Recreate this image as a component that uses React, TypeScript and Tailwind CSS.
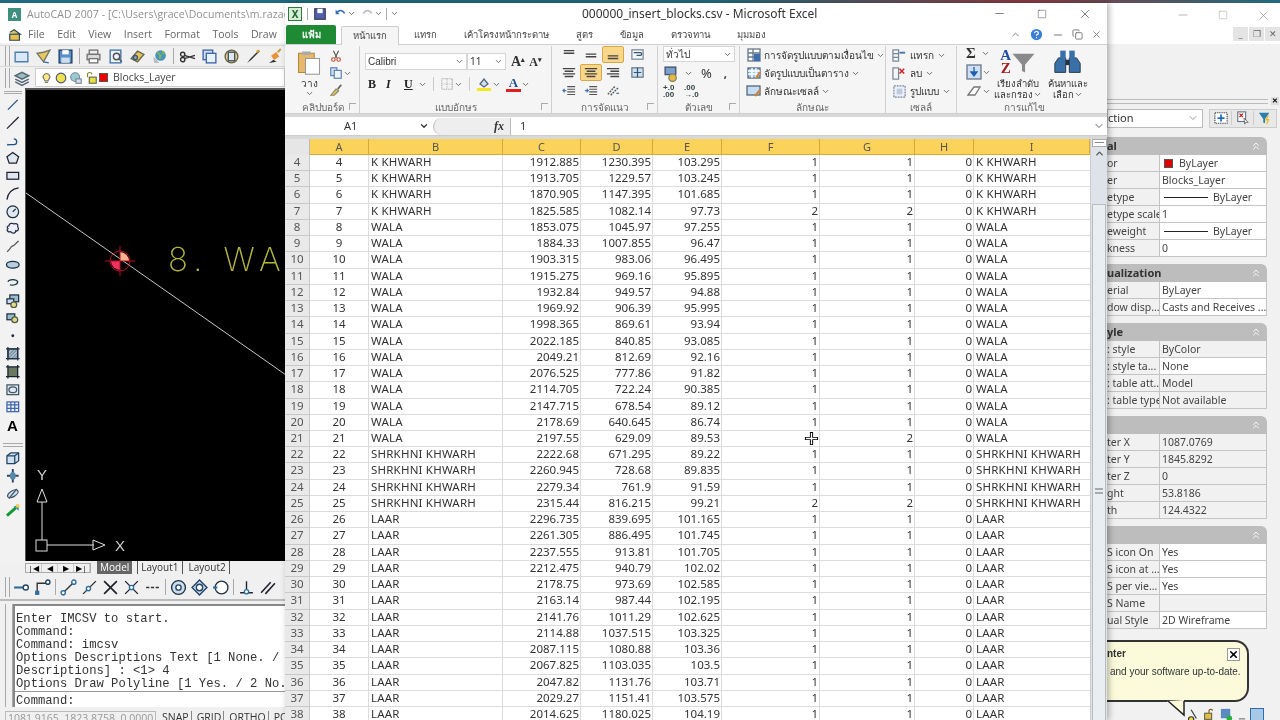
import React from "react";
import { ChevronDown, ChevronsUp, Minus, Square, X, HelpCircle, ChevronUp, Copy } from "lucide-react";

type I = { children: React.ReactNode; s?: number; cls?: string };
const Ico = ({ children, s = 16, cls = "" }: I) => (
  <svg width={s} height={s} viewBox="0 0 16 16" fill="none" strokeWidth={1.3} className={`shrink-0 ${cls}`}>
    {children}
  </svg>
);

const rows: [number, string, string, string, string, string, string, string][] = [
  [4, "K KHWARH", "1912.885", "1230.395", "103.295", "1", "1", "0"],
  [5, "K KHWARH", "1913.705", "1229.57", "103.245", "1", "1", "0"],
  [6, "K KHWARH", "1870.905", "1147.395", "101.685", "1", "1", "0"],
  [7, "K KHWARH", "1825.585", "1082.14", "97.73", "2", "2", "0"],
  [8, "WALA", "1853.075", "1045.97", "97.255", "1", "1", "0"],
  [9, "WALA", "1884.33", "1007.855", "96.47", "1", "1", "0"],
  [10, "WALA", "1903.315", "983.06", "96.495", "1", "1", "0"],
  [11, "WALA", "1915.275", "969.16", "95.895", "1", "1", "0"],
  [12, "WALA", "1932.84", "949.57", "94.88", "1", "1", "0"],
  [13, "WALA", "1969.92", "906.39", "95.995", "1", "1", "0"],
  [14, "WALA", "1998.365", "869.61", "93.94", "1", "1", "0"],
  [15, "WALA", "2022.185", "840.85", "93.085", "1", "1", "0"],
  [16, "WALA", "2049.21", "812.69", "92.16", "1", "1", "0"],
  [17, "WALA", "2076.525", "777.86", "91.82", "1", "1", "0"],
  [18, "WALA", "2114.705", "722.24", "90.385", "1", "1", "0"],
  [19, "WALA", "2147.715", "678.54", "89.12", "1", "1", "0"],
  [20, "WALA", "2178.69", "640.645", "86.74", "1", "1", "0"],
  [21, "WALA", "2197.55", "629.09", "89.53", "", "2", "0"],
  [22, "SHRKHNI KHWARH", "2222.68", "671.295", "89.22", "1", "1", "0"],
  [23, "SHRKHNI KHWARH", "2260.945", "728.68", "89.835", "1", "1", "0"],
  [24, "SHRKHNI KHWARH", "2279.34", "761.9", "91.59", "1", "1", "0"],
  [25, "SHRKHNI KHWARH", "2315.44", "816.215", "99.21", "2", "2", "0"],
  [26, "LAAR", "2296.735", "839.695", "101.165", "1", "1", "0"],
  [27, "LAAR", "2261.305", "886.495", "101.745", "1", "1", "0"],
  [28, "LAAR", "2237.555", "913.81", "101.705", "1", "1", "0"],
  [29, "LAAR", "2212.475", "940.79", "102.02", "1", "1", "0"],
  [30, "LAAR", "2178.75", "973.69", "102.585", "1", "1", "0"],
  [31, "LAAR", "2163.14", "987.44", "102.195", "1", "1", "0"],
  [32, "LAAR", "2141.76", "1011.29", "102.625", "1", "1", "0"],
  [33, "LAAR", "2114.88", "1037.515", "103.325", "1", "1", "0"],
  [34, "LAAR", "2087.115", "1080.88", "103.36", "1", "1", "0"],
  [35, "LAAR", "2067.825", "1103.035", "103.5", "1", "1", "0"],
  [36, "LAAR", "2047.82", "1131.76", "103.71", "1", "1", "0"],
  [37, "LAAR", "2029.27", "1151.41", "103.575", "1", "1", "0"],
  [38, "LAAR", "2014.625", "1180.025", "104.19", "1", "1", "0"],
];

const BL = "#2f6f9f";
const Line = ({ d, c = "#1f4f80" }: { d: string; c?: string }) => <path d={d} stroke={c} />;

const paletteTop = [
  <Line d="M3 13L13 3" />,
  <Line d="M2 14L14 2" c="#223" />,
  <><Line d="M3 12h6c4 0 4-6 0-6" /><circle cx="3" cy="12" r="1" fill={BL} /></>,
  <path d="M8 2.5L14 7l-2.3 6.5H4.3L2 7z" fill="#dfe8f0" stroke="#223" />,
  <rect x="2" y="4.5" width="12" height="7" fill="#dfe8f0" stroke="#223" />,
  <path d="M2 14C3 7 7 3 14 2" stroke="#223" />,
  <><circle cx="8" cy="8" r="6" fill="#dfe8f0" stroke="#234" /><path d="M8 8l3-3" stroke="#234" /></>,
  <path d="M4 5c0-3 4-3 5-2 2-1 5 0 4 3 2 2 0 5-2 4 0 3-4 3-5 1-3 1-5-2-3-3-1-1-1-3 1-3z" fill="#eef" stroke="#234" />,
  <path d="M2 13c3-1 3-5 6-6s3-3 6-5" stroke="#555" />,
  <ellipse cx="8" cy="8" rx="6.5" ry="3.5" fill="#bcd" stroke="#134" />,
  <path d="M3 7c1-3 9-3 10 0 0 3-5 4-8 3" stroke="#134" />,
  <><rect x="5" y="2" width="9" height="7" fill="#9bc" stroke="#234" /><rect x="2" y="6" width="7" height="5" fill="#cdf" stroke="#234" /><circle cx="9" cy="12" r="3" fill="#dd8" stroke="#554" /></>,
  <><rect x="2" y="4" width="8" height="6" fill="#9bc" stroke="#234" /><circle cx="10" cy="10" r="3" fill="#dd8" stroke="#554" /></>,
  <circle cx="8" cy="8" r="1.5" fill="#234" />,
  <><rect x="3" y="3" width="10" height="10" fill="#abc" stroke="#234" /><path d="M3 6L6 3M3 10l7-7M3 13L13 3M7 13l6-6M10 13l3-3" stroke="#567" strokeWidth=".8" /><path d="M1 3h14M1 13h14M3 1v14M13 1v14" stroke="#234" /></>,
  <><rect x="3" y="3" width="10" height="10" fill="#6a7a60" /><path d="M1 3h14M1 13h14M3 1v14M13 1v14" stroke="#123" /></>,
  <><path d="M2 3h12v10H2z" fill="#dfe8f0" stroke="#456" /><ellipse cx="8" cy="8" rx="4" ry="3" stroke="#456" /></>,
  <><rect x="2" y="3" width="12" height="10" fill="#eaf2fb" stroke="#46a" /><path d="M2 6h12M2 9.5h12M6 3v10M10 3v10" stroke="#46a" /></>,
];
const paletteBottom = [
  <><path d="M2 6l4-3h8v8l-4 3H2z" fill="#cfe0ee" stroke="#246" /><path d="M2 6h8v8M10 6l4-3" stroke="#246" /></>,
  <><path d="M8 1v14M2 8h12" stroke="#346" strokeWidth="2" /><ellipse cx="8" cy="8" rx="3" ry="4" fill="#58a" /></>,
  <><ellipse cx="8" cy="8" rx="6" ry="3" transform="rotate(-30 8 8)" fill="#cde" stroke="#456" /><path d="M4 13L12 3" stroke="#456" /></>,
  <><path d="M2 13L11 5" stroke="#193" strokeWidth="3" /><path d="M9 3h5v5z" fill="#28a" /><circle cx="13" cy="3" r="2" fill="#ec4" /></>,
];

const tb1 = [
  <path d="M2 4h12v9H2z" fill="#dbe9f7" stroke="#4a7fb0" />,
  <><path d="M2 5l6 8 6-11-6 2z" fill="#e8c860" stroke="#776" /><path d="M8 13l5 1" stroke={BL} /></>,
  <><rect x="2" y="2" width="12" height="12" fill="#5b8fc9" stroke="#246" /><rect x="5" y="2" width="6" height="4" fill="#fff" /><rect x="4" y="9" width="8" height="5" fill="#cde" /></>,
  null,
  <><rect x="4" y="2" width="8" height="4" fill="#eee" stroke="#777" /><rect x="2" y="6" width="12" height="5" fill="#ddd" stroke="#777" /><rect x="4" y="10" width="8" height="4" fill="#fff" stroke="#777" /></>,
  <><rect x="3" y="2" width="10" height="12" fill="#eef4fb" stroke="#47a" /><circle cx="9" cy="8" r="3" stroke="#555" /><path d="M11 10l3 3" stroke="#555" /></>,
  <><path d="M2 10l6-7 6 3-6 7z" fill="#e6c64e" stroke="#665" /><circle cx="6" cy="9" r="2" fill="#8ab" stroke="#456" /></>,
  <><circle cx="9" cy="7" r="5" fill="#4a90c0" /><path d="M6 4l3 3-1 3M11 3l1 3" stroke="#7b5" strokeWidth="2" /><path d="M2 8l6 6H3z" fill="#bbb" /></>,
  null,
  <><circle cx="3.5" cy="6" r="2" stroke="#333" /><circle cx="3.5" cy="11" r="2" stroke="#333" /><path d="M5 7l10 3M5 10l10-3" stroke="#333" /></>,
  <><rect x="2" y="2" width="9" height="9" fill="#cfe0f0" stroke="#46a" /><rect x="5" y="5" width="9" height="9" fill="#e8f0f8" stroke="#46a" /></>,
  <><circle cx="8" cy="8" r="6" fill="#e6d08a" stroke="#664" /><rect x="5" y="4" width="6" height="8" fill="#dfe8f0" stroke="#456" /></>,
  <><path d="M2 14l3-4 8-8 1 1-8 8z" fill="#333" /><path d="M11 4l2-2" stroke="#e8a030" strokeWidth="2" /></>,
  <><path d="M2 14l4-3 3 2z" fill="#333" /><rect x="5" y="5" width="6" height="5" fill="#e8923a" transform="rotate(-35 8 8)" /><path d="M10 4l3-3" stroke="#c8a040" strokeWidth="2" /></>,
];
const tb3 = [
  <><path d="M1 8h10" stroke={BL} strokeWidth="2" /><circle cx="12" cy="8" r="2.4" fill="#fff" stroke="#246" /></>,
  <><path d="M3 14V4h9" stroke="#333" /><circle cx="13" cy="3" r="2" fill="#fff" stroke="#246" /><rect x="1" y="11" width="4" height="4" fill={BL} /></>,
  null,
  <><path d="M3 13L13 3" stroke="#333" /><circle cx="3" cy="13" r="2" fill="#fff" stroke={BL} /><circle cx="13" cy="3" r="2" fill="#fff" stroke={BL} /></>,
  <><path d="M2 14L14 2" stroke="#333" /><circle cx="7" cy="9" r="2" fill="#fff" stroke={BL} /></>,
  <path d="M2 2l12 12M2 14L14 2" stroke="#223" strokeWidth="1.6" />,
  <><path d="M2 2l12 12M2 14L14 2" stroke="#223" /><circle cx="8" cy="8" r="2" fill="#fff" stroke={BL} /></>,
  <path d="M2 8h3M6.5 8h3M11 8h3" stroke="#333" strokeWidth="1.5" />,
  null,
  <><circle cx="8" cy="8" r="6.5" fill="#cde" stroke="#234" /><circle cx="8" cy="8" r="2.5" fill="#fff" stroke="#246" /></>,
  <><path d="M8 1l7 7-7 7-7-7z" fill="#cde" stroke="#246" /><circle cx="8" cy="8" r="3" fill="#fff" stroke="#246" /></>,
  <><circle cx="9" cy="8" r="6" fill="#fff" stroke="#234" /><path d="M1 8h4" stroke={BL} strokeWidth="2" /></>,
  null,
  <><path d="M8 2v10M2 13h12" stroke="#223" /><circle cx="8" cy="12" r="2" fill="#fff" stroke={BL} /></>,
  <path d="M2 13L11 3M6 14l9-10" stroke="#223" strokeWidth="1.5" />,
];

const Grip = () => <div className="w-[5px] h-[20px] border-x border-[#a8a8a8] mr-[3px] shrink-0" />;
const Tb = ({ items, gap = "gap-[5px]" }: { items: (React.ReactNode | null)[]; gap?: string }) => (
  <div className={`flex items-center ${gap}`}>
    {items.map((c, i) =>
      c === null ? <div key={i} className="w-px h-[16px] bg-[#aaa]" /> : <Ico key={i} s={17}>{c}</Ico>
    )}
  </div>
);

const cmd = [
  "Enter IMCSV to start.",
  "Command:",
  "Command: imcsv",
  "Options Descriptions Text [1 None. / 2 Block",
  "Descriptions] : <1> 4",
  "Options Draw Polyline [1 Yes. / 2 No.] <1> 1",
];

function AutoCad() {
  return (
    <div className="w-[285px] shrink-0 h-full flex flex-col overflow-hidden bg-[#f0f0f0] font-['Open_Sans',sans-serif]">
      <div className="h-[23px] bg-white flex items-center pl-[8px] gap-[6px] whitespace-nowrap shrink-0">
        <div className="w-[13px] h-[13px] bg-[#3f8f7f] text-white text-[8px] leading-[13px] text-center font-bold shrink-0">A</div>
        <span className="text-[10.5px] tracking-[0.1px] text-[#8f8f8f]">AutoCAD 2007 - [C:\Users\grace\Documents\m.razaq</span>
      </div>
      <div className="h-[17px] bg-white flex items-center pl-[8px] text-[10.5px] text-[#666] whitespace-nowrap shrink-0">
        <Ico s={14}><path d="M2 5l5-3 7 5H2v7h11V7" fill="#e8c050" stroke="#245" /></Ico>
        <div className="flex gap-[12.5px] pl-[6px]">
          {["File", "Edit", "View", "Insert", "Format", "Tools", "Draw"].map((m) => <span key={m}>{m}</span>)}
        </div>
      </div>
      <div className="h-[22px] mt-[2px] border-y border-[#d8d8d8] flex items-center pl-[5px] shrink-0">
        <Grip />
        <Tb items={tb1} />
      </div>
      <div className="h-[21px] flex items-center pl-[5px] shrink-0">
        <Grip />
        <Ico s={18}><path d="M2 6l6-3 6 3-6 3z" fill="#9bb" stroke="#567" /><path d="M2 9l6 3 6-3M2 11.5l6 3 6-3" stroke="#567" /></Ico>
        <div className="ml-[4px] flex-1 h-[19px] bg-white border border-[#ccc] flex items-center gap-[1px] pl-[4px] text-[10.5px] leading-[17px] text-[#444] whitespace-nowrap">
          <Ico s={13}><path d="M5 10a4 4 0 1 1 6 0l-1 2H6zM6 14h4" fill="#ffe98a" stroke="#776" /></Ico>
          <Ico s={14}><circle cx="8" cy="8" r="5.5" fill="#f0e050" stroke="#457" /></Ico>
          <Ico s={14}><circle cx="7" cy="7" r="5" fill="#9cc" stroke="#789" /><rect x="8" y="9" width="6" height="5" fill="#dde" stroke="#789" /></Ico>
          <Ico s={14}><path d="M4 7V4c0-3 5-3 5 0" stroke="#8a8a20" /><rect x="6" y="7" width="8" height="7" fill="#e6e040" stroke="#665" /></Ico>
          <div className="w-[9px] h-[9px] bg-[#ee0000] border border-[#555] mr-[4px]" />
          <span>Blocks_Layer</span>
        </div>
      </div>
      <div className="h-[473px] flex shrink-0">
        <div className="w-[25px] shrink-0 flex flex-col items-center pt-[3px] bg-[#f2f2f2]">
          <div className="w-[18px] h-[3px] border-y border-[#aaa] mb-[3px]" />
          <div className="flex flex-col items-center gap-[2.2px]">
            {paletteTop.map((c, i) => <Ico key={i} s={15.6}>{c}</Ico>)}
            <span className="text-[15px] leading-[17px] font-bold text-black font-['Liberation_Sans',sans-serif]">A</span>
          </div>
          <div className="w-[20px] h-[4px] border-y border-[#aaa] mt-[9px] mb-[3px]" />
          <div className="flex flex-col items-center gap-[2.2px]">
            {paletteBottom.map((c, i) => <Ico key={i} s={15.6}>{c}</Ico>)}
          </div>
        </div>
        <div className="flex-1 bg-black border-t-2 border-l border-[#555] overflow-hidden">
          <svg width="260" height="473" viewBox="0 0 260 473" className="block" fill="none">
            <path d="M0 103L260 285" stroke="#c8c8c8" />
            <circle cx="94" cy="171" r="10" fill="none" stroke="#b01020" />
            <path d="M94 171V162a9 9 0 0 1 9 9z" fill="#ffb090" />
            <path d="M94 171h-9a9 9 0 0 0 9 9z" fill="#f03060" />
            <path d="M79 171h30M94 156v30" stroke="#b01020" />
            <text x="142" y="181" fill="#b4b43c" fontFamily="Inter, sans-serif" fontWeight="200" fontSize="33" letterSpacing="6">8. WA</text>
            <text x="11" y="390" fill="#cfcfcf" fontFamily="Liberation Sans, sans-serif" fontSize="15">Y</text>
            <path d="M16 450V412" stroke="#ddd" /><path d="M16 399l5 13H11z" stroke="#ddd" />
            <rect x="10" y="450" width="11" height="11" stroke="#ddd" />
            <path d="M21 455h47" stroke="#ddd" /><path d="M79 455l-12-5v10z" stroke="#ddd" />
            <text x="89" y="461" fill="#cfcfcf" fontFamily="Liberation Sans, sans-serif" fontSize="15">X</text>
          </svg>
        </div>
      </div>
      <div className="h-[13px] flex items-center pl-[25px] text-[10px] bg-[#f0f0f0] shrink-0">
        <div className="flex items-center border border-[#aaa] text-[8px] text-black leading-none">
          {["|◀", "◀", "▶", "▶|"].map((t) => <span key={t} className="w-[16px] text-center border-r border-[#ccc]">{t}</span>)}
        </div>
        <span className="bg-[#666] text-white px-[3px] ml-[6px] leading-[13px]">Model</span>
        <span className="text-[#333] ml-[5px] border-x border-[#555] px-[3px] leading-[13px]">Layout1</span>
        <span className="text-[#333] ml-[3px] border-r border-[#555] px-[3px] leading-[13px]">Layout2</span>
      </div>
      <div className="h-[26px] mt-[1px] border-b-2 border-[#bbb] flex items-center pl-[5px] shrink-0">
        <Grip />
        <Tb items={tb3} gap="gap-[4px]" />
      </div>
      <div className="h-[103px] mt-[3px] ml-[5px] flex shrink-0">
        <div className="w-[8px] border-x border-[#aaa] shrink-0" />
        <div className="flex-1 bg-white border-t-2 border-l-2 border-[#888] font-['Liberation_Mono',monospace] text-[12.2px] leading-[13px] text-[#333] whitespace-nowrap overflow-hidden flex flex-col">
          <div className="flex-1 pt-[7px] pl-px border-b border-[#999]">
            {cmd.map((l) => <div key={l}>{l}</div>)}
          </div>
          <div className="h-[18px] pl-px leading-[18px]">Command:</div>
        </div>
      </div>
      <div className="h-[15px] mt-[3px] flex items-center pl-[5px] text-[10.5px] text-[#333] whitespace-nowrap shrink-0">
        <div className="w-[151px] h-[14px] border border-[#bbb] text-[#999] pl-[2px] leading-[13px] overflow-hidden shrink-0">1081.9165, 1823.8758, 0.0000</div>
        <div className="flex gap-[5px] ml-[6px] leading-[13px]">
          <span className="pr-[2px] border-r border-[#888]">SNAP</span>
          <span className="pr-[2px] border-r border-[#888]">GRID</span>
          <span className="pr-[2px] border-r border-[#888]">ORTHO</span>
          <span>POLAR</span>
        </div>
      </div>
    </div>
  );
}

const Arrow = () => <ChevronDown size={9} strokeWidth={2.5} className="text-[#666] shrink-0" />;
const Launcher = () => (
  <span className="absolute right-[3px] top-[3px] w-[7px] h-[7px] border-l border-t border-[#aaa]" />
);
const Group = ({ w, label, launch, children }: { w: string; label: string; launch?: boolean; children: React.ReactNode }) => (
  <div className={`${w} shrink-0 h-full flex flex-col border-r border-[#d0d0d0]`}>
    <div className="flex-1 min-h-0">{children}</div>
    <div className="h-[13px] relative text-center text-[10px] leading-[14px] text-[#666] shrink-0">
      {label}
      {launch && <Launcher />}
    </div>
  </div>
);

const alignPaths: Record<number, string> = {
  0: "M2 3h12M2 6h12",
  1: "M2 7h12M2 10h12",
  2: "M2 9h12M2 12h12",
  4: "M1 3h14M3 6h10M1 9h14M3 12h10",
  5: "M1 3h14M3 6h10M1 9h14M3 12h10",
  6: "M1 3h14M5 6h10M1 9h14M5 12h10",
};

const Ribbon = () => (
  <div className="h-[70px] bg-[#f5f5f5] border-y border-[#cfcfcf] flex pl-[2px] pt-[1px] shrink-0 text-[11px] text-[#333] font-['Noto_Sans',sans-serif]">
    <Group w="w-[73px]" label="คลิปบอร์ด" launch>
      <div className="flex pl-[8px] pt-[2px] gap-[6px]">
        <div className="flex flex-col items-center w-[28px]">
          <Ico s={28}><rect x="2" y="3" width="9" height="11" fill="#e8b96a" stroke="#b08840" strokeWidth=".6" /><rect x="6" y="6" width="8" height="9" fill="#fff" stroke="#999" strokeWidth=".6" /><rect x="4" y="2" width="5" height="2" fill="#aaa" /></Ico>
          <span className="text-[10px] leading-[11px] mt-[2px]">วาง</span>
          <Arrow />
        </div>
        <div className="flex flex-col gap-[3px] pt-[1px]">
          <Ico s={14}><path d="M5 2l4 8M11 2L7 10" stroke="#555" /><circle cx="5" cy="12" r="2" stroke="#c05030" /><circle cx="11" cy="12" r="2" stroke="#c05030" /></Ico>
          <div className="flex items-center"><Ico s={14}><rect x="2" y="2" width="7" height="9" fill="#cfe0f5" stroke="#5a80b0" /><rect x="6" y="5" width="8" height="9" fill="#eef4fb" stroke="#5a80b0" /></Ico><Arrow /></div>
          <Ico s={14}><path d="M2 14l6-7 3 2-5 5z" fill="#e8c060" stroke="#886" /><path d="M10 7l4-5" stroke="#666" strokeWidth="2" /></Ico>
        </div>
      </div>
    </Group>
    <Group w="w-[192px]" label="แบบอักษร" launch>
      <div className="flex flex-col gap-[6px] pl-[5px] pt-[7px]">
        <div className="flex items-center">
          <div className="w-[102px] h-[17px] bg-white border border-[#d5d5d5] flex items-center justify-between px-[2px] font-['Liberation_Sans',sans-serif] text-[10px]">Calibri<Arrow /></div>
          <div className="w-[39px] h-[17px] bg-white border border-[#d5d5d5] flex items-center justify-between px-[2px] text-[10px]">11<Arrow /></div>
          <span className="ml-[5px] text-[14px] leading-none font-bold font-['Liberation_Serif',serif]">A<sup className="text-[7px]">▴</sup></span>
          <span className="ml-[4px] text-[12px] leading-none font-bold font-['Liberation_Serif',serif]">A<sup className="text-[7px]">▾</sup></span>
        </div>
        <div className="flex items-center pl-[3px] text-[#222] font-['Liberation_Serif',serif]">
          <b className="text-[12px] w-[18px] leading-none">B</b>
          <i className="text-[12px] w-[18px] leading-none font-semibold">I</i>
          <u className="text-[12px] w-[14px] leading-none font-bold">U</u><Arrow />
          <div className="w-px h-[14px] bg-[#ccc] mx-[6px]" />
          <Ico s={14}><rect x="2" y="2" width="12" height="12" stroke="#999" strokeDasharray="1 1" /><path d="M8 2v12M2 8h12" stroke="#bbb" strokeDasharray="1 1" /></Ico><Arrow />
          <div className="w-px h-[14px] bg-[#ccc] mx-[6px]" />
          <Ico s={16}><path d="M4 8l4-5 4 5-4 3z" fill="#cfe0f0" stroke="#567" /><rect x="1" y="12" width="14" height="3" fill="#f2e820" /></Ico><Arrow />
          <div className="flex flex-col items-center ml-[5px]"><span className="text-[13px] leading-[12px] font-bold text-[#1f4f90]">A</span><div className="w-[15px] h-[3px] bg-[#e02020]" /></div><Arrow />
        </div>
      </div>
    </Group>
    <Group w="w-[106px]" label="การจัดแนว" launch>
      <div className="grid grid-cols-[22px_22px_22px_26px] gap-y-px pl-[6px]">
        {[0, 1, 2, 3, 4, 5, 6, 7, 8, 9, 10].map((n) => (
          <div key={n} className={`h-[17px] flex items-center justify-center rounded-[2px] ${n === 2 || n === 5 ? "bg-[#f8d68a] border border-[#d8a848]" : ""}`}>
            {n === 8 ? (
              <Ico s={14}><path d="M6 3h9M6 6h9M6 9h9M6 12h9" stroke="#555" /><path d="M5 7.5H1M3 5.5l-2 2 2 2" stroke="#47a" /></Ico>
            ) : n === 9 ? (
              <Ico s={14}><path d="M6 3h9M6 6h9M6 9h9M6 12h9" stroke="#555" /><path d="M1 7.5h4M3 5.5l2 2-2 2" stroke="#47a" /></Ico>
            ) : n === 10 ? (
              <Ico s={15}><path d="M2 12L10 3M5 13l8-8" stroke="#555" strokeWidth="1.5" strokeDasharray="2 1" /><path d="M11 11h3" stroke="#47a" /></Ico>
            ) : n === 3 ? (
              <Ico s={15}><rect x="2" y="3" width="12" height="10" fill="#f4f7fa" stroke="#789" /><path d="M4 6h7c2 0 2 3 0 3H7" stroke="#357" /></Ico>
            ) : n === 7 ? (
              <Ico s={15}><rect x="2" y="3" width="12" height="10" fill="#cfe0f0" stroke="#678" /><path d="M4 8h8M8 3v10" stroke="#357" /></Ico>
            ) : (
              <Ico s={14}><path d={alignPaths[n]} stroke="#444" strokeWidth="1.5" /></Ico>
            )}
          </div>
        ))}
      </div>
    </Group>
    <Group w="w-[82px]" label="ตัวเลข" launch>
      <div className="flex flex-col gap-[2px] pl-[5px]">
        <div className="w-[72px] h-[16px] bg-white border border-[#d5d5d5] flex items-center justify-between px-[2px] text-[10px]">ทั่วไป<Arrow /></div>
        <div className="flex items-center gap-[4px] h-[18px]">
          <Ico s={17}><rect x="2" y="2" width="10" height="7" fill="#7a9fd0" stroke="#456" /><circle cx="9" cy="12" r="3.5" fill="#e8b840" stroke="#886" /></Ico><Arrow />
          <span className="text-[13px] leading-none ml-[4px]">%</span>
          <span className="ml-[8px] font-bold leading-none">,</span>
        </div>
        <div className="flex items-center gap-[4px] text-[8px] font-['Liberation_Sans',sans-serif] leading-[7px] text-[#344] h-[14px] font-bold">
          <span className="w-[17px]">+.0<br />.00</span>
          <span className="w-[17px]">.00<br />→.0</span>
        </div>
      </div>
    </Group>
    <Group w="w-[146px]" label="ลักษณะ">
      <div className="flex flex-col gap-[2px] pl-[6px] pt-[1px] text-[10px] whitespace-nowrap">
        <div className="flex items-center gap-[2px] h-[16px]"><Ico s={16}><rect x="2" y="2" width="12" height="12" fill="#fff" stroke="#678" /><path d="M2 6h12M2 10h12M7 2v12" stroke="#678" /><rect x="8" y="7" width="6" height="7" fill="#3a6fb0" /></Ico>การจัดรูปแบบตามเงื่อนไข<Arrow /></div>
        <div className="flex items-center gap-[2px] h-[16px]"><Ico s={16}><rect x="2" y="3" width="12" height="10" fill="#9ccaf0" stroke="#567" /><path d="M2 6h12M2 9h12M6 3v10M10 3v10" stroke="#fff" /><path d="M10 13l4-6" stroke="#d08030" strokeWidth="2" /></Ico>จัดรูปแบบเป็นตาราง<Arrow /></div>
        <div className="flex items-center gap-[2px] h-[16px]"><Ico s={16}><rect x="1" y="3" width="13" height="9" fill="#c5dcf5" stroke="#567" /><path d="M9 13l5-6" stroke="#d08030" strokeWidth="2" /></Ico>ลักษณะเซลล์<Arrow /></div>
      </div>
    </Group>
    <Group w="w-[71px]" label="เซลล์">
      <div className="flex flex-col gap-[2px] pl-[6px] pt-[1px] whitespace-nowrap text-[10px]">
        <div className="flex items-center gap-[3px] h-[16px]"><Ico s={15}><rect x="1" y="2" width="6" height="12" stroke="#789" /><path d="M1 6h6M1 10h6" stroke="#789" /><path d="M8 5h6" stroke="#47a" strokeWidth="2" /></Ico>แทรก<Arrow /></div>
        <div className="flex items-center gap-[3px] h-[16px]"><Ico s={15}><rect x="1" y="2" width="6" height="12" stroke="#789" /><path d="M8 3l5 5M13 3L8 8" stroke="#d02020" strokeWidth="1.6" /></Ico>ลบ<Arrow /></div>
        <div className="flex items-center gap-[3px] h-[16px]"><Ico s={15}><rect x="2" y="2" width="12" height="12" fill="#eef" stroke="#789" strokeDasharray="2 1" /><path d="M5 5h6v6H5z" fill="#bcd" /></Ico>รูปแบบ<Arrow /></div>
      </div>
    </Group>
    <div className="w-[135px] shrink-0 h-full flex flex-col">
      <div className="flex-1 flex min-h-0 pl-[9px]">
        <div className="flex flex-col gap-[4px]">
          <div className="flex items-center h-[14px]"><span className="font-['Liberation_Serif',serif] font-bold text-[15px] leading-none w-[15px]">Σ</span><Arrow /></div>
          <div className="flex items-center h-[16px]"><Ico s={16}><rect x="1" y="1" width="14" height="14" fill="#cfe0f5" stroke="#678" /><path d="M8 3v8M5 8l3 4 3-4z" fill="#2060b0" stroke="#2060b0" /></Ico><Arrow /></div>
          <div className="flex items-center h-[14px]"><Ico s={16}><path d="M2 12l6-8h6l-5 8z" fill="#fff" stroke="#777" /></Ico><Arrow /></div>
        </div>
        <div className="flex flex-col items-center w-[52px] ml-[2px] text-[9.5px] leading-[11px] text-center">
          <div className="h-[31px] flex items-center font-['Liberation_Serif',serif] font-bold text-[15px] leading-[13px]">
            <span className="text-[#2050a0]">A<br /><span className="text-[#a02020]">Z</span></span>
            <Ico s={25}><path d="M1 3h14L9 10v5l-2-1v-4z" fill="#8a8a8a" /></Ico>
          </div>
          <span className="whitespace-nowrap mt-[1px]">เรียงลำดับ</span>
          <span className="whitespace-nowrap flex items-center">และกรอง<Arrow /></span>
        </div>
        <div className="flex flex-col items-center w-[50px] text-[9.5px] leading-[11px] text-center">
          <div className="h-[31px] flex items-center"><Ico s={29}><path d="M3 6h4v8H1V9zM13 6H9v8h6V9z" fill="#3a70a8" stroke="#234" strokeWidth=".5" /><rect x="4" y="2" width="3" height="5" fill="#3a70a8" /><rect x="9" y="2" width="3" height="5" fill="#3a70a8" /><rect x="7" y="7" width="2" height="3" fill="#234" /></Ico></div>
          <span className="whitespace-nowrap mt-[1px]">ค้นหาและ</span>
          <span className="whitespace-nowrap flex items-center">เลือก<Arrow /></span>
        </div>
      </div>
      <div className="h-[13px] text-center text-[10px] leading-[14px] text-[#666] shrink-0">การแก้ไข</div>
    </div>
  </div>
);

const colW = ["w-[59px]", "w-[134px]", "w-[78px]", "w-[72px]", "w-[69px]", "w-[98px]", "w-[95px]", "w-[59px]", "w-[116px]"];
const colN = ["A", "B", "C", "D", "E", "F", "G", "H", "I"];

function Excel() {
  return (
    <div className="w-[822px] shrink-0 h-full flex flex-col bg-white overflow-hidden relative z-10 shadow-[2px_0_6px_rgba(0,0,0,0.3)] font-['Noto_Sans',sans-serif]">
      <div className="h-[21px] flex items-center shrink-0 relative pl-[3px] bg-white">
        <div className="w-[14px] h-[14px] bg-[#d8ecd8] border border-[#2a7a3a] text-[#1a6a2a] text-[10px] leading-[12px] text-center font-bold">X</div>
        <div className="w-px h-[12px] bg-[#aaa] mx-[5px]" />
        <Ico s={14} cls="mr-[7px]"><rect x="2" y="2" width="12" height="12" fill="#5060b0" stroke="#334" /><rect x="5" y="2" width="6" height="5" fill="#fff" /></Ico>
        <Ico s={13}><path d="M3 8c2-5 8-5 10 0" stroke="#3a70b8" strokeWidth="2" /><path d="M2 3v6h5z" fill="#3a70b8" /></Ico>
        <Arrow />
        <Ico s={13} cls="ml-[5px] opacity-40"><path d="M3 8c2-5 8-5 10 0" stroke="#558" strokeWidth="2" /></Ico>
        <Arrow />
        <div className="w-px h-[12px] bg-[#aaa] mx-[3px]" />
        <Arrow />
        <span className="absolute left-[297px] top-0 leading-[21px] text-[12px] text-[#333] whitespace-nowrap">000000_insert_blocks.csv  -  Microsoft Excel</span>
        <div className="ml-auto flex items-center gap-[31px] pr-[15px] text-[#444]">
          <Minus size={13} strokeWidth={1.2} />
          <Square size={10} strokeWidth={1.2} />
          <X size={14} strokeWidth={1.2} />
        </div>
      </div>
      <div className="h-[20px] flex items-end shrink-0 text-[9.5px] text-[#444] pl-[1px] relative">
        <div className="w-[50px] h-[19px] bg-[#1f8a34] text-white font-bold text-center leading-[19px] rounded-t-[2px]">แฟ้ม</div>
        <div className="w-[58px] h-[19px] bg-[#f5f5f5] border border-b-0 border-[#ccc] rounded-t-[2px] text-center leading-[18px] ml-[5px] -mb-px z-10">หน้าแรก</div>
        <div className="flex h-[19px] leading-[19px] pl-[15px] gap-[27px] whitespace-nowrap">
          <span>แทรก</span><span>เค้าโครงหน้ากระดาษ</span><span>สูตร</span><span>ข้อมูล</span><span>ตรวจทาน</span><span>มุมมอง</span>
        </div>
        <div className="ml-auto flex items-center gap-[8px] pr-[5px] h-[19px] text-[#777]">
          <ChevronUp size={11} />
          <HelpCircle size={15} className="text-white fill-[#3a7fd8]" />
          <Minus size={12} />
          <Copy size={11} />
          <X size={11} />
        </div>
      </div>
      <Ribbon />
      <div className="h-[3px] bg-[#d8d8d8] shrink-0" />
      <div className="h-[19px] flex items-center bg-white shrink-0 border-b border-[#ccc] text-[11px] text-[#333]">
        <div className="w-[148px] flex items-center justify-between pl-[59px] pr-[4px] h-full">A1<ChevronDown size={10} strokeWidth={3} /></div>
        <div className="w-[78px] h-[17px] bg-[#eee] rounded-l-full border-l border-[#bbb] flex items-center justify-end pr-[6px] border-r">
          <i className="font-['Liberation_Serif',serif] font-bold text-[12px]">fx</i>
        </div>
        <span className="pl-[9px]">1</span>
        <ChevronDown size={12} strokeWidth={2} className="ml-auto mr-[2px] text-[#666]" />
      </div>
      <div className="h-[3px] bg-[#d8d8d8] shrink-0" />
      <div className="flex-1 flex min-h-0">
        <div className="flex-1 min-w-0 text-[11.5px] text-[#333] leading-none">
          <div className="h-[16px] flex text-[11px] text-[#555]">
            <div className="w-[25px] shrink-0 bg-[#e6e6e6] border-r border-[#bbb]" />
            {colN.map((c, i) => (
              <div key={c} className={`${colW[i]} shrink-0 bg-[#fbd25a] border-r border-[#d8a838] border-b text-center leading-[15px]`}>{c}</div>
            ))}
          </div>
          {rows.map((r) => (
            <div key={r[0]} className="h-[16.235px] flex items-center whitespace-nowrap">
              <div className="w-[25px] h-full shrink-0 bg-[#e9e9e9] border-b border-r border-[#c8c8c8] text-center text-[#555] leading-[14px]">{r[0]}</div>
              <div className={`${colW[0]} h-full shrink-0 border-r border-b border-[#dcdcdc] text-center leading-[14px]`}>{r[0]}</div>
              <div className={`${colW[1]} h-full shrink-0 border-r border-b border-[#dcdcdc] pl-[2px] leading-[14px] tracking-[0.2px]`}>{r[1]}</div>
              {[2, 3, 4, 5, 6, 7].map((k) => (
                <div key={k} className={`${colW[k]} h-full shrink-0 border-r border-b border-[#dcdcdc] pr-[1px] text-right leading-[14px]`}>{r[k]}</div>
              ))}
              <div className={`${colW[8]} h-full shrink-0 border-b border-[#dcdcdc] pl-[2px] leading-[14px] tracking-[0.2px]`}>{r[1]}</div>
            </div>
          ))}
        </div>
        <div className="w-[17px] shrink-0 bg-[#dde3e9] border-l border-[#ccc] flex flex-col items-center overflow-hidden">
          <div className="w-[15px] h-[8px] shrink-0 border border-[#aaa] bg-white mb-px"><div className="h-px w-[9px] bg-[#888] mx-auto mt-[2px]" /></div>
          <ChevronUp size={11} strokeWidth={3} className="text-[#555] shrink-0" />
          <div className="w-[14px] h-[574px] shrink-0 bg-[#e9eef3] border border-[#bbb] mt-[45px] flex items-center justify-center"><div className="w-[8px] h-[6px] border-y-2 border-[#aaa]" /></div>
        </div>
      </div>
      <div className="absolute left-[519px] top-[428px] pointer-events-none">
        <Ico s={15}><path d="M8 1v14M1 8h14" stroke="#000" strokeWidth="3.4" /><path d="M8 2v12M2 8h12" stroke="#fff" strokeWidth="1.4" /></Ico>
      </div>
    </div>
  );
}

const Sec = ({ t, rows }: { t: string; rows: [string, React.ReactNode, boolean][] }) => (
  <div className="w-[160px] shrink-0">
    <div className="h-[18px] bg-[#bdbdbd] rounded-tr-[6px] flex items-center justify-between pr-[5px] text-[11px] font-bold text-[#333]">
      <span>{t}</span>
      <ChevronsUp size={12} strokeWidth={1.8} className="text-white" />
    </div>
    {rows.map(([a, b, w], i) => (
      <div key={i} className="h-[17px] flex border-b border-r border-[#c4c4c4] text-[10.5px] leading-[16px] text-[#444] whitespace-nowrap overflow-hidden">
        <div className="w-[53px] shrink-0 border-r border-[#c4c4c4] overflow-hidden">{a}</div>
        <div className={`flex-1 pl-[2px] flex items-center overflow-hidden ${w ? "bg-white" : ""}`}>{b}</div>
      </div>
    ))}
  </div>
);

const Dash = ({ label }: { label: string }) => (
  <span className="flex items-center gap-[5px] w-full"><span className="w-[44px] h-px bg-[#222] ml-[2px]" />{label}</span>
);

function Props() {
  return (
    <div className="flex-1 h-full bg-[#f1f1f1] flex flex-col relative overflow-hidden font-['Noto_Sans',sans-serif]">
      <div className="h-[24px] bg-white flex items-center gap-[28px] pl-[69px] text-[#888] shrink-0">
        <Minus size={14} strokeWidth={1} />
        <Square size={10} strokeWidth={1} />
        <X size={15} strokeWidth={1} />
      </div>
      <div className="h-[17px] bg-white flex justify-end gap-[1px] shrink-0 text-[#666]">
        {["_", "❐", "✕"].map((t) => <span key={t} className="w-[15px] h-[14px] bg-[#e4e4e4] text-[9px] leading-[14px] text-center">{t}</span>)}
      </div>
      <div className="h-[8px] mt-[53px] flex items-center shrink-0">
        <div className="flex-1 h-[5px] border-y border-[#bbb]" />
        <span className="w-[8px] h-[8px] bg-[#ddd] text-[7px] leading-[8px] text-center font-bold text-black ml-[3px] mr-px">✕</span>
      </div>
      <div className="flex items-center h-[20px] mt-[3px] shrink-0">
        <div className="w-[96px] h-[19px] bg-white border border-[#bbb] flex items-center justify-between pr-[3px] text-[11px] text-[#333]">ction<ChevronDown size={12} strokeWidth={1} /></div>
        <div className="flex ml-[6px] border border-[#ccc] bg-[#e8e8e8] h-[19px] items-center">
          <span className="w-[22px] flex justify-center border-r border-[#ccc]"><Ico s={14}><rect x="1" y="2" width="14" height="12" fill="#fff" stroke="#444" strokeDasharray="1.5 1" /><path d="M8 4v8M4 8h8" stroke="#1f6fc0" strokeWidth="2" /></Ico></span>
          <span className="w-[22px] flex justify-center border-r border-[#ccc]"><Ico s={14}><rect x="2" y="1" width="9" height="11" fill="#fff" stroke="#678" /><path d="M4 3l4 4M8 3L4 7" stroke="#c02020" strokeWidth="1.5" /><path d="M9 8l5 5-3 0 -1 2z" fill="#fff" stroke="#333" strokeWidth=".7" /></Ico></span>
          <span className="w-[22px] flex justify-center"><Ico s={14}><path d="M1 2h12L8 9v5l-2-1V9z" fill="#2a7fb0" /><path d="M12 5l-3 5h3l-2 5" stroke="#e8c020" strokeWidth="1.5" /></Ico></span>
        </div>
      </div>
      <div className="flex flex-col gap-[7px] mt-[9px]">
        <Sec t="al" rows={[
          ["or", <span className="flex items-center gap-[6px] pl-[2px]"><span className="w-[9px] h-[9px] bg-[#e00000] border border-[#555]" />ByLayer</span>, true],
          ["er", "Blocks_Layer", true],
          ["etype", <Dash label="ByLayer" />, true],
          ["etype scale", "1", true],
          ["eweight", <Dash label="ByLayer" />, true],
          ["kness", "0", true],
        ]} />
        <Sec t="ualization" rows={[
          ["erial", "ByLayer", true],
          ["dow disp...", "Casts and Receives ...", true],
        ]} />
        <Sec t="yle" rows={[
          [": style", "ByColor", false],
          [": style ta...", "None", true],
          [": table att...", "Model", false],
          [": table type", "Not available", false],
        ]} />
        <Sec t="" rows={[
          ["ter X", "1087.0769", false],
          ["ter Y", "1845.8292", false],
          ["ter Z", "0", false],
          ["ght", "53.8186", false],
          ["th", "124.4322", false],
        ]} />
        <Sec t="" rows={[
          ["S icon On", "Yes", true],
          ["S icon at ...", "Yes", true],
          ["S per vie...", "Yes", true],
          ["S Name", "", false],
          ["ual Style", "2D Wireframe", true],
        ]} />
      </div>
      <div className="absolute left-0 top-[637px] w-[142px] h-[62px] bg-[#fbfbdc] border-2 border-l-0 border-[#333] rounded-r-[14px] text-[10px] text-[#333] font-['Liberation_Sans',sans-serif]">
        <div className="font-bold pt-[5px] leading-[13px]">nter</div>
        <div className="pl-[3px] pt-[5px] leading-[13px] whitespace-nowrap">and your software up-to-date.</div>
        <div className="absolute right-[7px] top-[6px] w-[13px] h-[13px] bg-white border border-[#999] flex items-center justify-center"><X size={11} strokeWidth={3.5} className="text-black" /></div>
      </div>
      <svg width="30" height="20" viewBox="0 0 30 20" className="absolute left-[60px] top-[697px]" fill="none">
        <path d="M0 1l17 14V0" fill="#fbfbdc" /><path d="M1 1l16 14V1" stroke="#222" strokeWidth="1.5" />
      </svg>
      <div className="absolute left-[78px] -bottom-[2px] flex items-end gap-[3px]">
        <Ico s={14}><path d="M7 2l6 10" stroke="#333" /><circle cx="7" cy="13" r="3" fill="#f0d840" stroke="#333" /></Ico>
        <Ico s={14}><path d="M8 6V3c0-2 4-2 4 0" stroke="#7a5a10" /><rect x="3" y="6" width="8" height="7" fill="#e0c040" stroke="#665" /></Ico>
        <Ico s={15}><rect x="2" y="2" width="10" height="10" fill="#5a8ac0" /><circle cx="11" cy="12" r="3" fill="#2ab040" /></Ico>
        <Ico s={10}><path d="M3 11h10" stroke="#444" /></Ico>
        <div className="w-[14px] h-[14px] bg-[#a8c8e8] border border-[#2f6fa8]" />
      </div>
    </div>
  );
}

export default function App() {
  return (
    <div className="w-[1280px] h-[720px] overflow-hidden flex flex-col bg-[#f0f0f0] blur-[0.3px]">
      <div className="h-[3px] shrink-0 bg-[linear-gradient(90deg,#1f6b7d_0%,#1f6b7d_55%,#8a3a40_80%,#1f6b7d_100%)]" />
      <div className="flex-1 flex min-h-0">
        <AutoCad />
        <Excel />
        <Props />
      </div>
    </div>
  );
}
